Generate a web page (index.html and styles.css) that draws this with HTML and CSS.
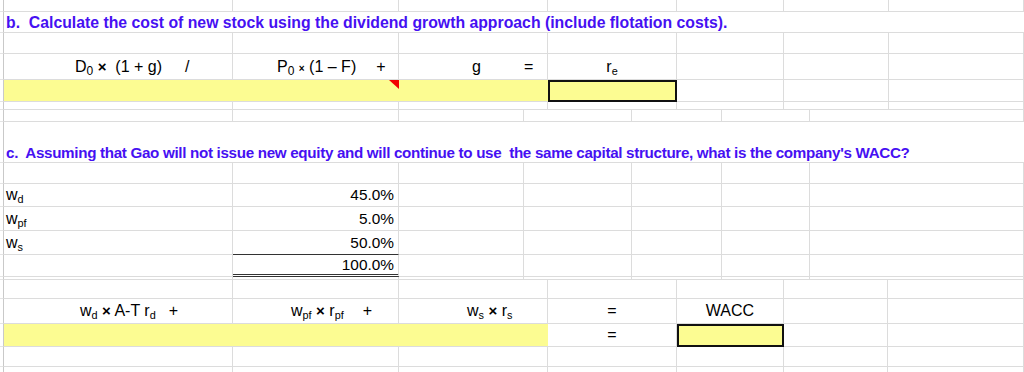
FILE: index.html
```html
<!DOCTYPE html>
<html lang="en">
<head>
<meta charset="utf-8">
<title>Cost of capital worksheet</title>
<link rel="stylesheet" href="styles.css">
</head>
<body>
<div class="sheet sheet-top">
  <div class="row r12"><div class="c edge"></div><div class="c"></div><div class="c"></div><div class="c"></div><div class="c"></div><div class="c"></div><div class="c"></div><div class="c"></div></div>
  <div class="row r21"><div class="c edge"></div><div class="c title title-b">b.  Calculate the cost of new stock using the dividend growth approach (include flotation costs).</div></div>
  <div class="row r21"><div class="c edge"></div><div class="c"></div><div class="c"></div><div class="c"></div><div class="c"></div><div class="c"></div><div class="c"></div><div class="c"></div></div>
  <div class="row r26">
    <div class="c edge"></div>
    <div class="c f f-d0"><span>D<sub class="s0">0</sub> <b class="x">×</b>  (1 + g)</span><span class="op op-div">/</span></div>
    <div class="c f f-p0"><span>P<sub class="s0">0</sub> <span class="xs">×</span> (1 – F)</span><span class="op op-plus1">+</span></div>
    <div class="c f f-g"><span class="g">g</span><span class="op eq1">=</span></div>
    <div class="c f ctr"><span>r<sub>e</sub></span></div>
    <div class="c"></div><div class="c"></div><div class="c"></div>
  </div>
  <div class="row r22">
    <div class="c edge"></div>
    <div class="c fill span3"><span class="note"></span></div>
    <div class="c box"></div>
    <div class="c"></div><div class="c"></div><div class="c"></div>
  </div>
  <div class="row r8"><div class="c edge"></div><div class="c"></div><div class="c"></div><div class="c"></div><div class="c"></div><div class="c"></div><div class="c"></div><div class="c"></div></div>
</div>

<div class="sheet sheet-mid">
  <div class="row r12"><div class="c edge"></div><div class="c"></div><div class="c"></div><div class="c"></div><div class="c"></div><div class="c"></div><div class="c"></div><div class="c"></div></div>
  <div class="row r41"><div class="c edge"></div><div class="c title title-c">c.  Assuming that Gao will not issue new equity and will continue to use  the same capital structure, what is the company's WACC?</div></div>
  <div class="row r21"><div class="c edge"></div><div class="c"></div><div class="c"></div><div class="c"></div><div class="c"></div><div class="c"></div><div class="c"></div><div class="c"></div></div>
  <div class="row r23"><div class="c edge"></div><div class="c lab"><span>w<sub>d</sub></span></div><div class="c num">45.0%</div><div class="c"></div><div class="c"></div><div class="c"></div><div class="c"></div><div class="c"></div></div>
  <div class="row r24"><div class="c edge"></div><div class="c lab"><span>w<sub>pf</sub></span></div><div class="c num">5.0%</div><div class="c"></div><div class="c"></div><div class="c"></div><div class="c"></div><div class="c"></div></div>
  <div class="row r24"><div class="c edge"></div><div class="c lab"><span>w<sub>s</sub></span></div><div class="c num rule">50.0%</div><div class="c"></div><div class="c"></div><div class="c"></div><div class="c"></div><div class="c"></div></div>
  <div class="row r22"><div class="c edge"></div><div class="c"></div><div class="c num dbl">100.0%</div><div class="c"></div><div class="c"></div><div class="c"></div><div class="c"></div><div class="c"></div></div>
  <div class="row r3"><div class="c edge"></div><div class="c"></div><div class="c"></div><div class="c"></div><div class="c"></div><div class="c"></div><div class="c"></div><div class="c"></div></div>
</div>

<div class="sheet sheet-bot">
  <div class="row r19"><div class="c edge"></div><div class="c"></div><div class="c"></div><div class="c"></div><div class="c"></div><div class="c"></div><div class="c"></div><div class="c"></div></div>
  <div class="row r25">
    <div class="c edge"></div>
    <div class="c f f-wd"><span>w<sub>d</sub> <b class="x">×</b> A-T r<sub>d</sub></span><span class="op op-plus2">+</span></div>
    <div class="c f f-wpf"><span>w<sub>pf</sub> <b class="x">×</b> r<sub>pf</sub></span><span class="op op-plus3">+</span></div>
    <div class="c f f-ws"><span>w<sub>s</sub> <b class="x">×</b> r<sub>s</sub></span></div>
    <div class="c f ctr">=</div>
    <div class="c f ctr">WACC</div>
    <div class="c"></div><div class="c"></div>
  </div>
  <div class="row r23">
    <div class="c edge"></div>
    <div class="c fill span3"></div>
    <div class="c f ctr">=</div>
    <div class="c box"></div>
    <div class="c"></div><div class="c"></div>
  </div>
  <div class="row r20"><div class="c edge"></div><div class="c"></div><div class="c"></div><div class="c"></div><div class="c"></div><div class="c"></div><div class="c"></div><div class="c"></div></div>
  <div class="row r20"><div class="c edge"></div><div class="c"></div><div class="c"></div><div class="c"></div><div class="c"></div><div class="c"></div><div class="c"></div><div class="c"></div></div>
</div>
</body>
</html>
```

FILE: styles.css
```css
* { box-sizing: border-box; margin: 0; padding: 0; }
html, body { background: #ffffff; }
body {
  margin: 0;
  width: 1024px;
  height: 372px;
  overflow: hidden;
  font-family: "Liberation Sans", Arial, Helvetica, sans-serif;
  font-size: 15.4px;
  color: #000;
}
.sheet-top { --cols: 4px 229px 166px 149px 129px 107px 105px 1fr; }
.sheet-mid { --cols: 4px 229px 166px 125px 108px 90px 88px 1fr; }
.sheet-bot { --cols: 4px 229px 166px 149px 129px 107px 104px 1fr; }

.row { display: grid; grid-template-columns: var(--cols); }
.r3 { height: 3px; }
.r8 { height: 8px; }
.r12 { height: 12px; }
.r19 { height: 19px; }
.r20 { height: 20px; }
.r21 { height: 21px; }
.r22 { height: 22px; }
.r23 { height: 23px; }
.r24 { height: 24px; }
.r25 { height: 25px; }
.r26 { height: 26px; }
.r41 { height: 41px; }

.c {
  border-right: 1px solid #dcdcdc;
  border-bottom: 1px solid #dcdcdc;
  display: flex;
  align-items: center;
  white-space: pre;
  position: relative;
  min-width: 0;
}
.c.edge { border-right: 1px solid #c9c9c9; border-bottom-color: #e4e4e4; }

.title {
  grid-column: 2 / -1;
  border-right: none;
  color: #4610f2;
  font-weight: bold;
  padding-left: 2px;
  overflow: visible;
}
.title-b { font-size: 15.8px; padding-top: 1px; }
.title-c { font-size: 15.2px; letter-spacing: -0.32px; align-items: flex-end; padding-bottom: 1px; }

sub { font-size: 68%; vertical-align: -3px; line-height: 0; }
sub.s0 { font-size: 75%; }
.x { font-size: 15px; font-weight: bold; }
.xs { font-size: 10px; font-weight: bold; }

.f { justify-content: flex-start; font-size: 16px; }
.f-d0 { padding-left: 71px; }
.f-p0 { padding-left: 44px; }
.f-g { padding-left: 73px; }
.f-wd { padding-left: 76px; }
.f-wpf { padding-left: 58px; }
.f-ws { padding-left: 68px; }
.op-div { margin-left: 23px; }
.op-plus1 { margin-left: 20px; }
.eq1 { margin-left: 43px; }
.op-plus2 { margin-left: 13px; }
.op-plus3 { margin-left: 19px; }

.c.ctr { justify-content: center; }

.lab { padding-left: 2px; font-size: 16px; }
.num { justify-content: flex-end; padding-right: 4px; }
.num.rule { border-bottom: 1px solid #333; }
.num.dbl { border-bottom: 3px double #333; }

.fill { background: #fcfc92; border-right: none; }
.span3 { grid-column: 2 / span 3; }
.box { background: #fcfc92; border: 2px solid #111; }

.note {
  position: absolute;
  top: 0;
  right: 149px;
  width: 10px;
  height: 9px;
  background: #f20000;
  clip-path: polygon(0 0, 100% 0, 100% 100%);
}
```
